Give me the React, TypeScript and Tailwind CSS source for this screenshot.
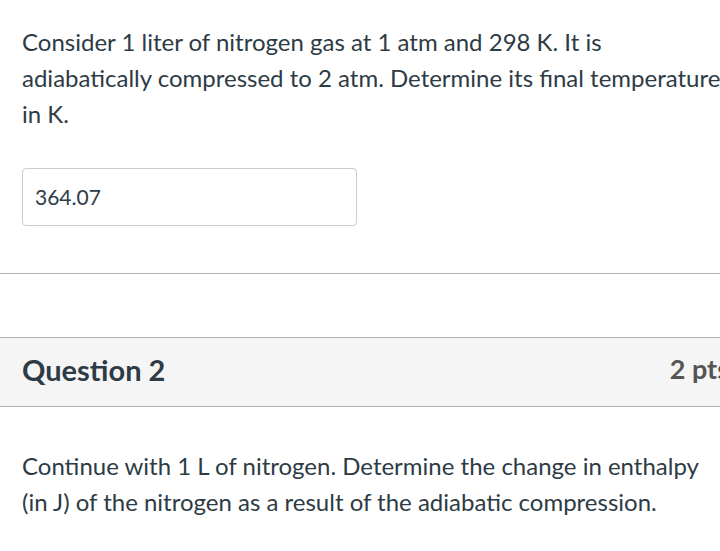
export default function App() {
  return (
    <div className="w-[720px] h-[551px] overflow-hidden bg-white" style={{ fontFamily: "Lato, 'Noto Sans', sans-serif" }}>
      <div className="w-[760px] text-[#2d3b45]">
        <div className="pl-[22px] pt-[24px]">
          <p className="w-[712px] text-[24px] leading-[36px]">
            Consider 1 liter of nitrogen gas at 1 atm and 298 K. It is adiabatically compressed to 2 atm. Determine its final temperature in K.
          </p>
          <div className="mt-[36px] w-[335px] h-[58px] border border-[#c7cdd1] rounded-[4px] flex items-center pl-[12px] text-[21px]">
            364.07
          </div>
        </div>
        <div className="mt-[47px] border-t border-[#b0b0b0]" />
        <div className="mt-[63px] h-[70px] bg-[#f5f5f5] border-y border-[#b0b0b0] flex items-center justify-between pl-[22px] pr-[31px] pb-[5px]">
          <span className="text-[29px] font-bold">Question 2</span>
          <span className="text-[27px] font-bold text-[#555]">2 pts</span>
        </div>
        <div className="pl-[22px] pt-[41px]">
          <p className="w-[695px] text-[24px] leading-[36px]">
            Continue with 1 L of nitrogen. Determine the change in enthalpy (in J) of the nitrogen as a result of the adiabatic compression.
          </p>
        </div>
      </div>
    </div>
  );
}
